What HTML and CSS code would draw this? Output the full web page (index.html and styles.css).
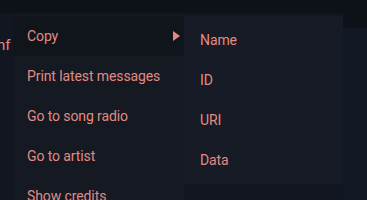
FILE: index.html
```html
<!DOCTYPE html>
<html>
<head>
    <meta charset="UTF-8">
    <title>Context menu</title>
    <link rel="stylesheet" href="styles.css">
</head>
<body>
    <div class="topbar"></div>
    <div class="page">
        <div class="side">
            <span class="side-label">Inf</span>
        </div>
        <div class="panel"></div>
    </div>

    <ul class="menu">
        <li class="menu-item active">Copy <span class="arrow"></span></li>
        <li class="menu-item">Print latest messages</li>
        <li class="menu-item">Go to song radio</li>
        <li class="menu-item">Go to artist</li>
        <li class="menu-item">Show credits</li>
    </ul>

    <ul class="submenu">
        <li class="menu-item">Name</li>
        <li class="menu-item">ID</li>
        <li class="menu-item">URI</li>
        <li class="menu-item">Data</li>
    </ul>
</body>
</html>
```

FILE: styles.css
```css
body {
    margin: 0;
    background-color: #0d1219;
    font-family: Roboto, "Noto Sans", sans-serif;
    font-size: 14px;
    color: #e48a84;
    height: 200px;
    overflow: hidden;
}
.topbar {
    height: 13px;
}
.page {
    display: flex;
    height: 187px;
}
.side {
    flex: 1;
    background-color: #111620;
    padding-top: 23px;
}
.side-label {
    display: block;
    margin-left: -7px;
    font-size: 15px;
}
.panel {
    width: 24px;
    margin-top: 15px;
    background-color: #131924;
}
.menu, .submenu {
    list-style: none;
    margin: 0;
    position: absolute;
}
.menu {
    left: 13px;
    top: 14px;
    width: 171px;
    padding: 2px 0;
    background-color: #141922;
}
.submenu {
    left: 184px;
    top: 16px;
    width: 159px;
    padding: 4px 0;
    background-color: #161b25;
}
.menu-item {
    display: flex;
    align-items: center;
    justify-content: space-between;
    height: 40px;
    padding: 0 4px 0 14px;
    letter-spacing: -0.1px;
}
.submenu .menu-item {
    padding-left: 16px;
}
.menu-item.active {
    background-color: #10141b;
}
.arrow {
    width: 0;
    height: 0;
    border-top: 5px solid transparent;
    border-bottom: 5px solid transparent;
    border-left: 7px solid #e48a84;
}
```
